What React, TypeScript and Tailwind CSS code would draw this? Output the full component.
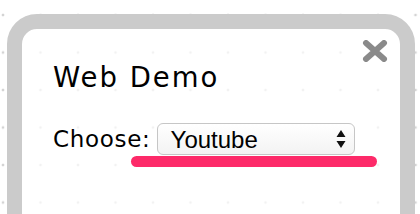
export default function App() {
  return (
    <div className="h-screen w-full overflow-hidden bg-white bg-[radial-gradient(circle,#d4d4d4_1.1px,transparent_1.7px)] bg-[length:37.5px_37.5px] bg-[position:21.75px_33.75px] pl-[7px] pt-[14px]">
      <div className="relative h-[320px] w-[408px] rounded-[30px] border-[15px] border-[#cbcbcb] bg-white/70 pl-[31px] pt-[32px]">
        <svg className="absolute right-[12px] top-[11px]" width="26" height="22" viewBox="0 0 26 22">
          <path d="M4 3 L22 19 M22 3 L4 19" stroke="#8a8a8a" strokeWidth="6" strokeLinecap="round" />
        </svg>
        <div className="text-[27.5px] leading-[32px] tracking-[2px] text-black [font-family:'DejaVu_Sans',sans-serif]">
          Web Demo
        </div>
        <div className="mt-[30px] flex items-center">
          <span className="text-[23px] leading-[32px] tracking-[0.7px] text-black [font-family:'DejaVu_Sans',sans-serif]">Choose:</span>
          <div className="relative ml-[6px]">
            <div className="flex h-[32px] w-[198px] items-center justify-between rounded-[6px] border border-[#c6c6c6] bg-gradient-to-b from-white to-[#f3f3f3] pl-[13px] pr-[8px]">
              <span className="pt-[2px] text-[24px] leading-none text-black [font-family:'Liberation_Sans',Arial,sans-serif]">Youtube</span>
              <svg width="10" height="20" viewBox="0 0 10 20">
                <path d="M5 1 L9.5 8 L0.5 8 Z M0.5 12 L9.5 12 L5 19 Z" fill="#111" />
              </svg>
            </div>
            <div className="absolute left-[-26px] top-[33px] h-[11px] w-[246px] rounded-full bg-[#fd2a69]" />
          </div>
        </div>
      </div>
    </div>
  );
}
